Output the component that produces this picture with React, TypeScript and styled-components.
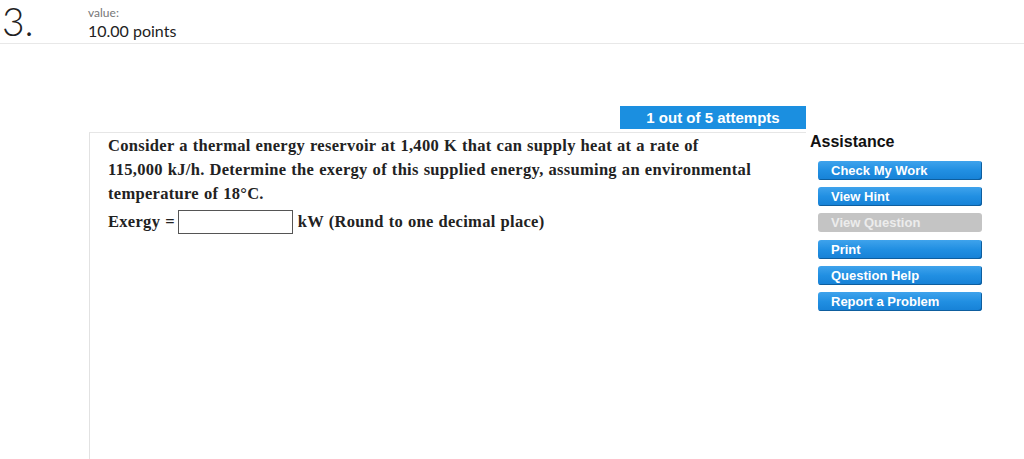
import styled, { createGlobalStyle } from 'styled-components';

const GlobalStyle = createGlobalStyle`
	html, body {
		margin: 0;
		padding: 0;
		background: #ffffff;
		font-family: 'Liberation Sans', Arial, sans-serif;
	}
`;

const Page = styled.div`
	width: 1024px;
	height: 459px;
	overflow: hidden;
	display: flex;
	flex-direction: column;
`;

const Header = styled.div`
	display: flex;
	flex-direction: row;
	height: 44px;
	border-bottom: 1px solid #e8e8e8;
	box-sizing: border-box;
`;

const Number = styled.div`
	width: 88px;
	padding-left: 2px;
	box-sizing: border-box;
	font-family: 'Lato', sans-serif;
	font-weight: 300;
	font-size: 39px;
	line-height: 43px;
	color: #222222;
`;

const ValueBlock = styled.div`
	display: flex;
	flex-direction: column;
	padding-top: 6px;
`;

const ValueLabel = styled.div`
	font-family: 'Lato', sans-serif;
	font-size: 12px;
	line-height: 14px;
	color: #777777;
`;

const Points = styled.div`
	font-family: 'Lato', sans-serif;
	font-size: 16px;
	line-height: 21px;
	color: #222222;
`;

const Main = styled.div`
	display: flex;
	flex-direction: column;
	padding-top: 62px;
	padding-left: 89px;
	flex: 1;
`;

const AttemptsRow = styled.div`
	width: 717px;
	display: flex;
	justify-content: flex-end;
`;

const Attempts = styled.div`
	width: 186px;
	height: 23px;
	background: #1b8fe0;
	color: #ffffff;
	font-weight: bold;
	font-size: 15px;
	line-height: 23px;
	text-align: center;
`;

const Body = styled.div`
	display: flex;
	flex-direction: row;
	flex: 1;
	margin-top: 3px;
`;

const Panel = styled.div`
	width: 717px;
	box-sizing: border-box;
	border-top: 1px solid #e6e6e6;
	border-left: 1px solid #e2e2e2;
	padding: 1px 0 0 18px;
	font-family: 'Liberation Serif', 'Times New Roman', serif;
	font-weight: bold;
	font-size: 16.5px;
	letter-spacing: 0.3px;
	word-spacing: 0.5px;
	line-height: 24px;
	color: #222222;
`;

const Question = styled.p`
	margin: 0;
	white-space: nowrap;
`;

const AnswerRow = styled.div`
	display: flex;
	align-items: center;
	height: 28px;
	margin-top: 2px;
	white-space: pre;
`;

const AnswerInput = styled.input`
	width: 115px;
	height: 24px;
	box-sizing: border-box;
	margin: 0 5px 0 3px;
	border: 1px solid #555555;
	padding: 0;
`;

const Sidebar = styled.div`
	display: flex;
	flex-direction: column;
	padding-left: 4px;
`;

const SidebarTitle = styled.div`
	font-weight: bold;
	font-size: 16px;
	line-height: 20px;
	color: #111111;
	margin-bottom: 9px;
`;

const ButtonList = styled.div`
	display: flex;
	flex-direction: column;
	gap: 7.2px;
	padding-left: 8px;
`;

const AssistButton = styled.button<{ $disabled?: boolean }>`
	width: 164px;
	height: 19px;
	box-sizing: border-box;
	border: none;
	border-radius: 3px;
	padding: 0 0 0 13px;
	text-align: left;
	font-family: 'Liberation Sans', Arial, sans-serif;
	font-weight: bold;
	font-size: 13px;
	line-height: 19px;
	color: ${p => (p.$disabled ? '#ececec' : '#ffffff')};
	background: ${p =>
		p.$disabled
			? '#c4c4c4'
			: 'linear-gradient(to bottom, #3fa3ec 0%, #218fe2 50%, #1681d6 100%)'};
	box-shadow: ${p => (p.$disabled ? 'none' : 'inset -1px -1px 0 #0e5e9e')};
`;

const buttons = [
	{ label: 'Check My Work' },
	{ label: 'View Hint' },
	{ label: 'View Question', disabled: true },
	{ label: 'Print' },
	{ label: 'Question Help' },
	{ label: 'Report a Problem' },
];

export default function App() {
	return (
		<>
			<GlobalStyle />
			<Page>
				<Header>
					<Number>3.</Number>
					<ValueBlock>
						<ValueLabel>value:</ValueLabel>
						<Points>10.00 points</Points>
					</ValueBlock>
				</Header>
				<Main>
					<AttemptsRow>
						<Attempts>1 out of 5 attempts</Attempts>
					</AttemptsRow>
					<Body>
						<Panel>
							<Question>
								Consider a thermal energy reservoir at 1,400 K that can supply heat at a rate of
								<br />
								115,000 kJ/h. Determine the exergy of this supplied energy, assuming an environmental
								<br />
								temperature of 18°C.
							</Question>
							<AnswerRow>
								Exergy =<AnswerInput type="text" />kW (Round to one decimal place)
							</AnswerRow>
						</Panel>
						<Sidebar>
							<SidebarTitle>Assistance</SidebarTitle>
							<ButtonList>
								{buttons.map(b => (
									<AssistButton key={b.label} $disabled={b.disabled}>
										{b.label}
									</AssistButton>
								))}
							</ButtonList>
						</Sidebar>
					</Body>
				</Main>
			</Page>
		</>
	);
}
